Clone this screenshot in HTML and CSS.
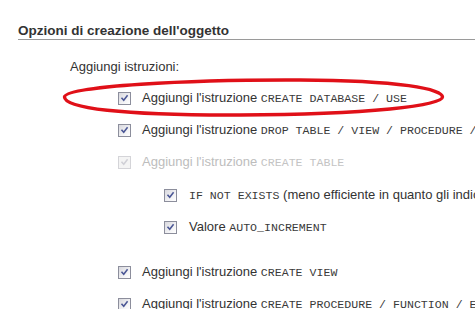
FILE: index.html
```html
<!DOCTYPE html>
<html lang="it">
<head>
<meta charset="utf-8">
<title>Opzioni di creazione dell'oggetto</title>
<link rel="stylesheet" href="styles.css">
</head>
<body>
<div class="page">
  <h2 class="title">Opzioni di creazione dell'oggetto</h2>
  <div class="group">
    <p class="lead">Aggiungi istruzioni:</p>
    <ul class="opts">
      <li class="opt"><span class="cb"><svg viewBox="0 0 13 13" width="13" height="13"><path d="M3.5 6.2 L5.6 8.6 L9.6 3.4" /></svg></span><span class="txt">Aggiungi l'istruzione <code>CREATE DATABASE / USE</code></span></li>
      <li class="opt"><span class="cb"><svg viewBox="0 0 13 13" width="13" height="13"><path d="M3.5 6.2 L5.6 8.6 L9.6 3.4" /></svg></span><span class="txt">Aggiungi l'istruzione <code>DROP TABLE / VIEW / PROCEDURE / FUNCTION / EVENT / TRIGGER</code></span></li>
      <li class="opt disabled"><span class="cb"><svg viewBox="0 0 13 13" width="13" height="13"><path d="M3.5 6.2 L5.6 8.6 L9.6 3.4" /></svg></span><span class="txt">Aggiungi l'istruzione <code>CREATE TABLE</code></span></li>
      <li class="nest">
        <ul class="sub">
          <li class="opt"><span class="cb"><svg viewBox="0 0 13 13" width="13" height="13"><path d="M3.5 6.2 L5.6 8.6 L9.6 3.4" /></svg></span><span class="txt"><code>IF NOT EXISTS</code> (meno efficiente in quanto gli indici saranno generati durante la creazione della tabella)</span></li>
          <li class="opt"><span class="cb"><svg viewBox="0 0 13 13" width="13" height="13"><path d="M3.5 6.2 L5.6 8.6 L9.6 3.4" /></svg></span><span class="txt">Valore <code>AUTO_INCREMENT</code></span></li>
        </ul>
      </li>
      <li class="opt"><span class="cb"><svg viewBox="0 0 13 13" width="13" height="13"><path d="M3.5 6.2 L5.6 8.6 L9.6 3.4" /></svg></span><span class="txt">Aggiungi l'istruzione <code>CREATE VIEW</code></span></li>
      <li class="opt"><span class="cb"><svg viewBox="0 0 13 13" width="13" height="13"><path d="M3.5 6.2 L5.6 8.6 L9.6 3.4" /></svg></span><span class="txt">Aggiungi l'istruzione <code>CREATE PROCEDURE / FUNCTION / EVENT</code></span></li>
    </ul>
  </div>
  <svg class="mark" viewBox="0 0 475 309" width="475" height="309">
    <path d="M64.5 97 C64.5 86 190 79.5 300 80 C400 80.5 442.5 89 442.5 97 C442.5 105.5 370 114.5 240 115 C120 115.5 64.5 108 64.5 97 Z" />
  </svg>
</div>
</body>
</html>
```

FILE: styles.css
```css
html, body {
  margin: 0;
  padding: 0;
  background: #ffffff;
}

body {
  width: 475px;
  height: 309px;
  overflow: hidden;
  font-family: "Liberation Sans", Arial, sans-serif;
  font-size: 13px;
  color: #333333;
  white-space: nowrap;
}

.page {
  position: relative;
  width: 475px;
  height: 309px;
  overflow: hidden;
}

.title {
  margin: 23px 0 0 18px;
  padding: 0;
  font-size: 13.5px;
  font-weight: bold;
  line-height: 16px;
  color: #333333;
  border-bottom: 1px solid #9a9a9a;
}

.group {
  display: flex;
  flex-direction: column;
  gap: 16px;
  padding: 18.5px 0 0 70px;
}

.lead {
  margin: 0;
  line-height: 16px;
}

.opts,
.sub {
  list-style: none;
  margin: 0;
  padding: 0;
  display: flex;
  flex-direction: column;
  gap: 16px;
}

.opts {
  padding-left: 48px;
}

.sub {
  padding-left: 46px;
}

.nest {
  margin-top: 1px;
  margin-bottom: 13px;
}

.opt {
  display: flex;
  align-items: center;
  height: 16px;
  line-height: 16px;
}

.cb {
  flex: none;
  width: 11px;
  height: 11px;
  border: 1px solid #8c8e9c;
  background: linear-gradient(135deg, #d8d8de 0%, #f2f2f4 60%, #ffffff 100%);
  margin-right: 11px;
  display: flex;
}

.cb svg {
  width: 11px;
  height: 11px;
}

.cb path {
  fill: none;
  stroke: #4a5695;
  stroke-width: 1.8;
  stroke-linecap: square;
}

.sub .cb {
  margin-right: 12px;
}

code {
  font-family: "Liberation Mono", "Courier New", monospace;
  font-size: 11.6px;
  color: #3a3a3a;
}

.disabled {
  color: #bdbdbd;
}

.disabled code {
  color: #c4c4c4;
}

.disabled .cb {
  border-color: #d4d4d8;
  background: #f4f4f4;
}

.disabled .cb path {
  stroke: #d0d0d6;
}

.mark {
  position: absolute;
  left: 0;
  top: 0;
  pointer-events: none;
}

.mark path {
  fill: none;
  stroke: #e01018;
  stroke-width: 3.4;
}
```
